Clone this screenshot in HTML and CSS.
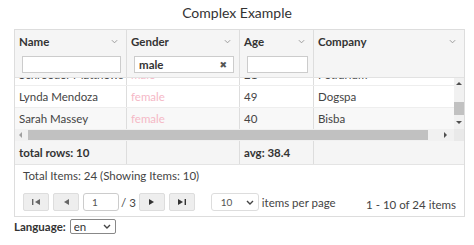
FILE: index.html
```html
<!DOCTYPE html>
<html lang="en">
<head>
    <meta charset="UTF-8">
    <title>Complex Example</title>
    <link rel="stylesheet" href="styles.css">
</head>
<body>
    <h1 class="title">Complex Example</h1>

    <div class="grid">
        <div class="head cols">
            <div class="hcell">
                <div class="label">Name <svg class="chev" viewBox="0 0 8 5"><path d="M1 1l3 3 3-3"/></svg></div>
                <input class="filter" type="text">
            </div>
            <div class="hcell">
                <div class="label">Gender <svg class="chev" viewBox="0 0 8 5"><path d="M1 1l3 3 3-3"/></svg></div>
                <div class="filter-wrap">
                    <input class="filter" type="text" value="male">
                    <span class="clear">✖</span>
                </div>
            </div>
            <div class="hcell">
                <div class="label">Age <svg class="chev" viewBox="0 0 8 5"><path d="M1 1l3 3 3-3"/></svg></div>
                <input class="filter" type="text">
            </div>
            <div class="hcell last">
                <div class="label">Company <svg class="chev" viewBox="0 0 8 5"><path d="M1 1l3 3 3-3"/></svg></div>
            </div>
        </div>

        <div class="body">
            <div class="viewport">
                <div class="rows">
                    <div class="row cols">
                        <div class="cell">Schroeder Matthews</div>
                        <div class="cell female">male</div>
                        <div class="cell">21</div>
                        <div class="cell">Petrarium</div>
                    </div>
                    <div class="row cols">
                        <div class="cell">Lynda Mendoza</div>
                        <div class="cell female">female</div>
                        <div class="cell">49</div>
                        <div class="cell">Dogspa</div>
                    </div>
                    <div class="row cols alt">
                        <div class="cell">Sarah Massey</div>
                        <div class="cell female">female</div>
                        <div class="cell">40</div>
                        <div class="cell">Bisba</div>
                    </div>
                </div>
            </div>
            <div class="vscroll">
                <span class="arrow up"></span>
                <span class="vthumb"></span>
                <span class="arrow down"></span>
            </div>
        </div>

        <div class="hscroll">
            <div class="htrack">
                <span class="arrow left"></span>
                <span class="hthumb"></span>
                <span class="arrow right"></span>
            </div>
            <div class="corner"></div>
        </div>

        <div class="foot cols">
            <div class="fcell">total rows: 10</div>
            <div class="fcell"></div>
            <div class="fcell">avg: 38.4</div>
            <div class="fcell last"></div>
        </div>

        <div class="pager">
            <div class="summary">Total Items: 24 (Showing Items: 10)</div>
            <div class="controls">
                <button class="pbtn"><svg viewBox="0 0 10 10"><rect x="1" y="2" width="1.4" height="6"/><path d="M9 2v6L4 5z"/></svg></button>
                <button class="pbtn"><svg viewBox="0 0 10 10"><path d="M8 2v6L3 5z"/></svg></button>
                <input class="page-input" type="text" value="1">
                <span class="of">/ 3</span>
                <button class="pbtn"><svg viewBox="0 0 10 10"><path d="M2 2v6l5-3z"/></svg></button>
                <button class="pbtn"><svg viewBox="0 0 10 10"><path d="M1 2v6l5-3z"/><rect x="7.6" y="2" width="1.4" height="6"/></svg></button>
                <span class="select-wrap per-page">
                    <select class="sel"><option>10</option></select>
                    <svg class="sel-chev" viewBox="0 0 8 5"><path d="M1 1l3 3 3-3"/></svg>
                </span>
                <span class="ipp">items per page</span>
                <span class="range">1 - 10 of 24 items</span>
            </div>
        </div>
    </div>

    <div class="lang">
        <label>Language:</label>
        <span class="select-wrap lang-sel">
            <select class="sel"><option>en</option></select>
            <svg class="sel-chev" viewBox="0 0 8 5"><path d="M1 1l3 3 3-3"/></svg>
        </span>
    </div>
</body>
</html>
```

FILE: styles.css
```css
body {
    margin: 0;
    font-family: Lato, "Liberation Sans", sans-serif;
    font-size: 11.5px;
    color: #444;
    background: #fff;
}

.title {
    margin: 0;
    padding-top: 4px;
    height: 25px;
    line-height: 18px;
    font-size: 14px;
    font-weight: normal;
    text-align: center;
    color: #333;
}

.grid {
    margin-left: 14px;
    width: 451px;
    border: 1px solid #ddd;
    box-sizing: border-box;
}

.cols {
    display: grid;
    grid-template-columns: 112px 113px 74px 1fr;
}

/* header */
.head {
    position: relative;
    z-index: 1;
    background: #f5f5f5;
    border-bottom: 1px solid #e2e2e2;
    height: 47px;
}

.hcell {
    border-right: 1px solid #ddd;
    padding: 2px 8px 0 4px;
}

.hcell.last {
    border-right: none;
    padding-right: 8px;
}

.label {
    display: flex;
    justify-content: space-between;
    align-items: center;
    height: 18px;
    font-weight: bold;
    color: #333;
}

.chev {
    width: 7px;
    height: 5px;
    fill: none;
    stroke: #999;
    stroke-width: 1.1;
}

.filter {
    display: block;
    margin: 6px 0 0 3px;
    width: 100%;
    height: 17px;
    border: 1px solid #ccc;
    background: #fff;
    box-sizing: border-box;
    padding: 0 4px;
    font: inherit;
    font-weight: bold;
    color: #333;
}

.filter-wrap {
    position: relative;
}

.clear {
    position: absolute;
    right: 4px;
    top: 4px;
    font-family: "DejaVu Sans", sans-serif;
    font-size: 9px;
    color: #555;
}

/* body */
.body {
    display: flex;
    height: 51px;
}

.viewport {
    flex: 1;
    overflow: hidden;
}

.rows {
    margin-top: -14px;
}

.row {
    height: 21px;
    line-height: 21px;
    border-bottom: 1px solid #eee;
    background: #fff;
}

.row.alt {
    background: #f8f8f8;
}

.cell {
    padding: 0 4px;
    border-right: 1px solid #ddd;
    white-space: nowrap;
    overflow: hidden;
}

.cell:last-child {
    border-right: none;
}

.female {
    color: #f5b8c6;
}

.vscroll {
    width: 10px;
    background: #f1f1f1;
    position: relative;
}

.vthumb {
    position: absolute;
    left: 0;
    top: 24px;
    width: 10px;
    height: 13px;
    background: #c1c1c1;
}

.arrow {
    position: absolute;
    width: 0;
    height: 0;
    border: 3px solid transparent;
}

.arrow.up {
    top: 4px;
    left: 2px;
    border-bottom-color: #505050;
    border-top-width: 0;
}

.arrow.down {
    bottom: 5px;
    left: 2px;
    border-top-color: #505050;
    border-bottom-width: 0;
}

.hscroll {
    display: flex;
    height: 12px;
}

.htrack {
    flex: 1;
    position: relative;
    background: #f1f1f1;
}

.hthumb {
    position: absolute;
    left: 13px;
    top: 1px;
    width: 400px;
    height: 10px;
    background: #c1c1c1;
}

.arrow.left {
    left: 4px;
    top: 3px;
    border-right-color: #a0a0a0;
    border-left-width: 0;
}

.arrow.right {
    right: 7px;
    top: 3px;
    border-left-color: #505050;
    border-right-width: 0;
}

.corner {
    width: 10px;
    background: #e9e9e9;
}

/* footer */
.foot {
    height: 23px;
    line-height: 23px;
    background: #f5f5f5;
    border-bottom: 1px solid #e4e4e4;
    font-weight: bold;
    color: #333;
}

.fcell {
    padding: 0 4px;
    border-right: 1px solid #ddd;
}

.fcell.last {
    border-right: none;
}

/* pager */
.pager {
    padding: 2px 8px 5px 8px;
}

.summary {
    line-height: 18px;
}

.controls {
    display: flex;
    align-items: center;
    margin-top: 8px;
    height: 18px;
}

.pbtn {
    width: 26px;
    height: 18px;
    margin-right: 4px;
    padding: 0;
    border: 1px solid #ddd;
    border-radius: 2px;
    background: #eee;
    display: flex;
    align-items: center;
    justify-content: center;
}

.pbtn svg {
    width: 10px;
    height: 10px;
    fill: #333;
}

.pbtn:nth-child(1) svg,
.pbtn:nth-child(2) svg {
    fill: #666;
}

.page-input {
    width: 36px;
    height: 18px;
    box-sizing: border-box;
    border: 1px solid #ccc;
    border-radius: 3px;
    padding: 0 8px;
    font: inherit;
    font-size: 10px;
    color: #555;
}

.of {
    margin: 0 3px 0 2px;
}

.select-wrap {
    position: relative;
    display: inline-block;
}

.sel {
    appearance: none;
    -webkit-appearance: none;
    font: inherit;
    color: #555;
    background: #fff;
    box-sizing: border-box;
}

.sel-chev {
    position: absolute;
    width: 8px;
    height: 5px;
    fill: none;
    stroke: #444;
    stroke-width: 1.4;
    pointer-events: none;
}

.per-page {
    margin-left: 12px;
}

.per-page .sel {
    display: block;
    width: 48px;
    height: 18px;
    border: 1px solid #ddd;
    border-radius: 3px;
    padding: 0 9px;
    font-size: 10px;
}

.per-page .sel-chev {
    right: 5px;
    top: 7px;
}

.ipp {
    margin-left: 3px;
}

.range {
    margin-left: auto;
    margin-top: 4px;
}

/* language */
.lang {
    display: flex;
    align-items: center;
    margin: 2px 0 0 14px;
}

.lang label {
    font-weight: bold;
    color: #333;
    margin-right: 4px;
}

.lang-sel .sel {
    display: block;
    width: 46px;
    height: 15px;
    border: 1px solid #888;
    border-radius: 2px;
    padding: 0 3px;
    line-height: 13px;
    color: #333;
}

.lang-sel .sel-chev {
    right: 5px;
    top: 5px;
}
```
